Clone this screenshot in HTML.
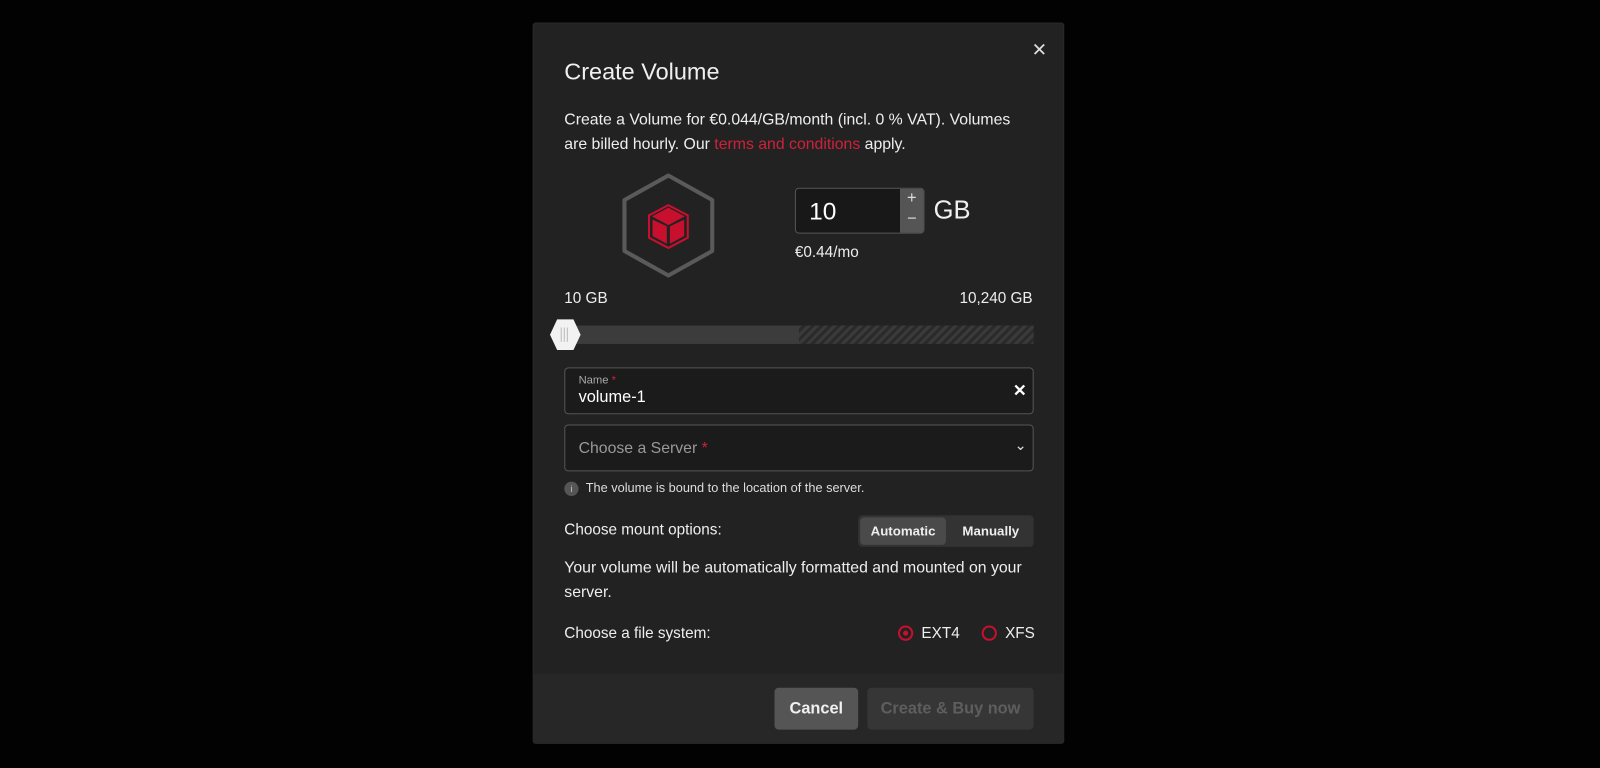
<!DOCTYPE html>
<html><head><meta charset="utf-8"><style>
*{box-sizing:border-box;margin:0;padding:0}
body{width:1600px;height:768px;background:#020202;font-family:"Liberation Sans",sans-serif;color:#eee;position:relative;overflow:hidden}
.w{position:absolute;left:0;top:0;width:1568px;height:753px;transform:scale(1.0204);transform-origin:0 0}
.m{position:absolute;left:522px;top:22px;width:521px;height:707px;background:#222;border-radius:3px;border:1px solid #2a2a2a}
.a{position:absolute}
.foot{position:absolute;left:0;right:0;bottom:0;height:68px;background:#272727}
.btn{position:absolute;height:41px;border-radius:4px;font-size:16px;font-weight:bold;display:flex;align-items:center;justify-content:center}
</style></head><body><div class="w">
<div class="m">
<div class="a" style="left:488px;top:16px;font-size:18px;color:#ddd">✕</div>
<div class="a" style="left:30px;top:34px;font-size:23px;color:#f0f0f0">Create Volume</div>
<div class="a" style="left:30px;top:83px;width:460px;font-size:15.5px;line-height:24px;color:#eee">Create a Volume for €0.044/GB/month (incl. 0 % VAT). Volumes are billed hourly. Our <span style="color:#d0213a">terms and conditions</span> apply.</div>
<svg class="a" style="left:84px;top:146px" width="96" height="104" viewBox="0 0 96 104"><polygon points="48,3 91,27 91,77 48,101 5,77 5,27" fill="none" stroke="#5a5a5a" stroke-width="4" stroke-linejoin="round"/>
<g fill="#c8102e" stroke="#c8102e"><polygon points="48,32 67,42 67,64 48,74 29,64 29,42" fill="none" stroke-width="2"/><polygon points="48,35 63,43 48,51 33,43"/><polygon points="33,47 46,53 46,69 33,62"/><polygon points="50,53 63,47 63,62 50,69"/></g></svg>
<div class="a" style="left:256px;top:161px;width:127px;height:45px;border:1px solid #555;border-radius:4px;background:#181818;overflow:hidden">
<div class="a" style="left:13px;top:9px;font-size:24px;color:#fff">10</div>
<div class="a" style="right:0;top:0;width:23px;height:45px;background:#555;color:#ddd;font-size:16px;text-align:center;line-height:20px">+<br>−</div></div>
<div class="a" style="left:392px;top:169px;font-size:25px;color:#f0f0f0">GB</div>
<div class="a" style="left:256px;top:216px;font-size:15px">€0.44/mo</div>
<div class="a" style="left:30px;top:261px;font-size:15px">10 GB</div>
<div class="a" style="right:30px;top:261px;font-size:15px">10,240 GB</div>
<div class="a" style="left:30px;top:296px;width:460px;height:18px;background:repeating-linear-gradient(135deg,#3a3a3a 0 3px,#2a2a2a 3px 6px)"></div>
<div class="a" style="left:30px;top:296px;width:230px;height:18px;background:#3c3c3c"></div>
<svg class="a" style="left:14px;top:288px" width="34" height="34"><polygon points="9,2 25,2 32,17 25,32 9,32 2,17" fill="#f2f2f2"/><path d="M13 10v14M16 10v14M19 10v14" stroke="#bbb"/></svg>
<div class="a" style="left:30px;top:337px;width:460px;height:46px;border:1px solid #555;border-radius:4px;background:#1b1b1b">
<div class="a" style="left:13px;top:6px;font-size:11px;color:#aaa">Name <span style="color:#d0213a">*</span></div>
<div class="a" style="left:13px;top:20px;font-size:16px;color:#fff">volume-1</div>
<div class="a" style="right:6px;top:12px;font-size:16px;color:#fff;font-weight:bold">✕</div></div>
<div class="a" style="left:30px;top:393px;width:460px;height:46px;border:1px solid #555;border-radius:4px;background:#1b1b1b">
<div class="a" style="left:13px;top:14px;font-size:15.5px;color:#999">Choose a Server <span style="color:#d0213a">*</span></div>
<div class="a" style="right:6px;top:11px;font-size:14px;color:#ddd">⌄</div></div>
<div class="a" style="left:30px;top:449px;width:14px;height:14px;border-radius:50%;background:#555;font-size:9px;text-align:center;line-height:14px;color:#ccc">i</div>
<div class="a" style="left:51px;top:448px;font-size:12.5px;color:#ddd">The volume is bound to the location of the server.</div>
<div class="a" style="left:30px;top:488px;font-size:15px;color:#eee">Choose mount options:</div>
<div class="a" style="left:318px;top:482px;width:172px;height:31px;background:#333;border-radius:4px">
<div class="a" style="left:2px;top:2px;width:84px;height:27px;background:#4a4a4a;border-radius:4px;font-size:13px;font-weight:bold;text-align:center;line-height:27px">Automatic</div>
<div class="a" style="left:88px;top:2px;width:84px;height:27px;font-size:13px;font-weight:bold;text-align:center;line-height:27px">Manually</div></div>
<div class="a" style="left:30px;top:522px;width:470px;font-size:15.5px;line-height:24px">Your volume will be automatically formatted and mounted on your server.</div>
<div class="a" style="left:30px;top:589px;font-size:15px">Choose a file system:</div>
<div class="a" style="left:357px;top:590px;width:15px;height:15px;border:2px solid #c8102e;border-radius:50%"><div style="margin:3px;width:5px;height:5px;border-radius:50%;background:#c8102e"></div></div>
<div class="a" style="left:380px;top:589px;font-size:15px">EXT4</div>
<div class="a" style="left:439px;top:590px;width:15px;height:15px;border:2px solid #c8102e;border-radius:50%"></div>
<div class="a" style="left:462px;top:589px;font-size:15px">XFS</div>
<div class="foot">
<div class="btn" style="left:236px;top:14px;width:82px;background:#555;color:#f0f0f0">Cancel</div>
<div class="btn" style="left:327px;top:14px;width:163px;background:#363636;color:#5e5e5e">Create &amp; Buy now</div></div>
</div>
</div></body></html>
